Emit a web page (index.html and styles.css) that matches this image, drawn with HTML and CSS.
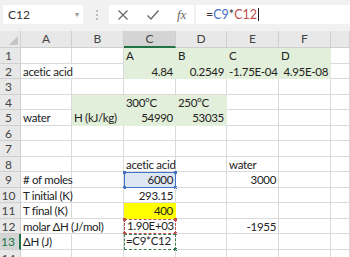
FILE: index.html
```html
<!DOCTYPE html>
<html lang="en">
<head>
  <meta charset="UTF-8" />
  <title>Book1 - Excel</title>
  <link rel="stylesheet" href="styles.css">
</head>
<body>
  <div class="bar">
    <div class="namebox">C12<span class="drop">&#9662;</span></div>
    <div class="grip"><i></i><i></i><i></i></div>
    <div class="btns">
      <svg width="12" height="12" viewBox="0 0 12 12"><path d="M1.5 1.5 L10.5 10.5 M10.5 1.5 L1.5 10.5" stroke="#6a6a6a" stroke-width="1.3" fill="none"/></svg>
      <svg width="14" height="12" viewBox="0 0 14 12"><path d="M1.5 6.5 L5 10 L12.5 1.5" stroke="#6a6a6a" stroke-width="1.4" fill="none"/></svg>
      <span class="fx">fx</span>
    </div>
    <div class="formula">=<span class="ref-b">C9</span>*<span class="ref-r">C12</span><span class="caret"></span></div>
  </div>

  <div class="sheet">
    <div class="corner"><span class="tri"></span></div>
    <div class="ch">A</div><div class="ch">B</div><div class="ch sel">C</div><div class="ch">D</div><div class="ch">E</div><div class="ch">F</div><div class="ch"></div>

    <div class="rh">1</div><div class="c"></div><div class="c"></div><div class="c g">A</div><div class="c g">B</div><div class="c g">C</div><div class="c g">D</div><div class="c"></div>
    <div class="rh">2</div><div class="c over">acetic acid</div><div class="c"></div><div class="c g num">4.84</div><div class="c g num">0.2549</div><div class="c g num">-1.75E-04</div><div class="c g num">4.95E-08</div><div class="c"></div>
    <div class="rh">3</div><div class="c"></div><div class="c"></div><div class="c"></div><div class="c"></div><div class="c"></div><div class="c"></div><div class="c"></div>
    <div class="rh">4</div><div class="c"></div><div class="c g"></div><div class="c g">300°C</div><div class="c g">250°C</div><div class="c"></div><div class="c"></div><div class="c"></div>
    <div class="rh">5</div><div class="c">water</div><div class="c g">H (kJ/kg)</div><div class="c g num">54990</div><div class="c g num">53035</div><div class="c"></div><div class="c"></div><div class="c"></div>
    <div class="rh">6</div><div class="c"></div><div class="c"></div><div class="c"></div><div class="c"></div><div class="c"></div><div class="c"></div><div class="c"></div>
    <div class="rh">7</div><div class="c"></div><div class="c"></div><div class="c"></div><div class="c"></div><div class="c"></div><div class="c"></div><div class="c"></div>
    <div class="rh">8</div><div class="c"></div><div class="c"></div><div class="c">acetic acid</div><div class="c"></div><div class="c">water</div><div class="c"></div><div class="c"></div>
    <div class="rh">9</div><div class="c">&#35; of moles</div><div class="c"></div><div class="c num blue">6000<i class="h tl"></i><i class="h tr"></i><i class="h bl"></i><i class="h br"></i></div><div class="c"></div><div class="c num">3000</div><div class="c"></div><div class="c"></div>
    <div class="rh">10</div><div class="c">T initial (K)</div><div class="c"></div><div class="c num">293.15</div><div class="c"></div><div class="c"></div><div class="c"></div><div class="c"></div>
    <div class="rh">11</div><div class="c">T final (K)</div><div class="c"></div><div class="c num yellow">400</div><div class="c"></div><div class="c"></div><div class="c"></div><div class="c"></div>
    <div class="rh">12</div><div class="c over">molar ΔH (J/mol)</div><div class="c"></div><div class="c num red">1.90E+03<i class="h rd tl"></i><i class="h rd tr"></i><i class="h rd bl"></i><i class="h rd br"></i></div><div class="c"></div><div class="c num">-1955</div><div class="c"></div><div class="c"></div>
    <div class="rh act">13</div><div class="c">ΔH (J)</div><div class="c"></div><div class="c edit">=C9*C12<i class="h gr br"></i></div><div class="c"></div><div class="c"></div><div class="c"></div><div class="c"></div>
    <div class="rh last">14</div><div class="c"></div><div class="c"></div><div class="c"></div><div class="c"></div><div class="c"></div><div class="c"></div><div class="c"></div>
  </div>
</body>
</html>
```

FILE: styles.css
```css
body {
  margin: 0;
  width: 350px;
  height: 257px;
  overflow: hidden;
  font-family: Lato, "Open Sans", sans-serif;
  font-size: 11.5px;
  color: #222;
  background: #fff;
}

/* formula bar */
.bar {
  display: flex;
  align-items: center;
  height: 31px;
  padding: 0 0 2px 3px;
  box-sizing: border-box;
  background: #f1f1f1;
}
.namebox {
  position: relative;
  width: 80px;
  height: 19px;
  line-height: 19px;
  padding-left: 5px;
  box-sizing: border-box;
  background: #fff;
  color: #333;
  font-size: 12px;
}
.drop {
  position: absolute;
  right: 4px;
  top: 0;
  font-size: 8px;
  color: #999;
}
.grip {
  display: flex;
  flex-direction: column;
  gap: 2px;
  margin: 0 11px 0 13px;
}
.grip i {
  width: 2px;
  height: 2px;
  background: #bdbdbd;
}
.btns {
  display: flex;
  align-items: center;
  gap: 17px;
  width: 85px;
  height: 19px;
  padding-left: 8px;
  box-sizing: border-box;
  background: #fff;
}
.fx {
  font-family: "Liberation Serif", serif;
  font-style: italic;
  font-size: 13px;
  color: #666;
}
.formula {
  flex: 1;
  height: 19px;
  line-height: 19px;
  margin-left: 2px;
  padding-left: 10px;
  background: #fff;
  color: #333;
  font-size: 12.5px;
}
.ref-b { color: #4472c4; }
.ref-r { color: #c0504d; }
.caret {
  display: inline-block;
  width: 1px;
  height: 13px;
  margin-left: 1px;
  vertical-align: -2px;
  background: #222;
}

/* grid */
.sheet {
  display: grid;
  grid-template-columns: 21px 51px 52px 52px 51px 52px 52px 1fr;
  grid-template-rows: 17px;
  grid-auto-rows: 15.5px;
}
.corner, .ch, .rh {
  background: #e8e8e8;
  color: #444;
  border-right: 1px solid #cfcfcf;
  border-bottom: 1px solid #cfcfcf;
  box-sizing: border-box;
  font-size: 12px;
}
.corner { position: relative; }
.tri {
  position: absolute;
  right: 2px;
  bottom: 2px;
  border-left: 9px solid transparent;
  border-bottom: 9px solid #c4c4c4;
}
.ch {
  text-align: center;
  line-height: 16px;
}
.ch.sel {
  background: #d4d4d4;
  border-bottom: 2px solid #217346;
}
.rh {
  text-align: center;
  padding-right: 3px;
  line-height: 15px;
}
.rh.act {
  background: #d4d4d4;
  color: #217346;
  border-right: 2px solid #217346;
}
.rh.last { line-height: 18px; }
.c {
  position: relative;
  padding: 0 2px;
  line-height: 15px;
  white-space: nowrap;
  letter-spacing: -0.3px;
  border-right: 1px solid #dadada;
  border-bottom: 1px solid #dadada;
  box-sizing: border-box;
}
.num { text-align: right; }
.over {
  overflow: visible;
  border-right-color: transparent;
  z-index: 1;
}
.g {
  background: #e2efda;
  border-color: #e2efda;
}
.yellow {
  background: #ffff00;
  border-color: #ffff00;
}
.blue {
  background: #dde7f4;
  border: 1px solid #4472c4;
  line-height: 13px;
}
.red {
  border: 1.5px dashed #c0504d;
  padding-right: 1px;
  line-height: 12px;
}
.edit {
  border: 1.5px dashed #3f7f52;
  line-height: 12px;
  padding-left: 1px;
}

/* range handles */
.h {
  position: absolute;
  width: 3px;
  height: 3px;
  background: #4472c4;
}
.h.rd { background: #c0504d; }
.h.gr { background: #217346; }
.tl { left: -2px; top: -2px; }
.tr { right: -2px; top: -2px; }
.bl { left: -2px; bottom: -2px; }
.br { right: -2px; bottom: -2px; }
```
